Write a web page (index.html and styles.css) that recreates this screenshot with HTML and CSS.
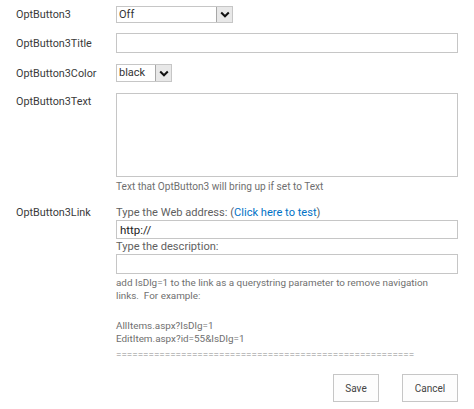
FILE: index.html
```html
<!DOCTYPE html>
<html>
<head>
<meta charset="utf-8">
<link rel="stylesheet" href="styles.css">
</head>
<body>
<div class="form">
  <div class="row r1">
    <div class="label">OptButton3</div>
    <div class="field">
      <div class="select sel-off"><span class="val">Off</span><span class="arrow"><svg width="10" height="7" viewBox="0 0 10 7"><path d="M1.2 1.5 L5 5.3 L8.8 1.5" fill="none" stroke="#111" stroke-width="2"/></svg></span></div>
    </div>
  </div>
  <div class="row r2">
    <div class="label">OptButton3Title</div>
    <div class="field"><div class="input h20"></div></div>
  </div>
  <div class="row r3">
    <div class="label">OptButton3Color</div>
    <div class="field">
      <div class="select sel-color"><span class="val">black</span><span class="arrow"><svg width="10" height="7" viewBox="0 0 10 7"><path d="M1.2 1.5 L5 5.3 L8.8 1.5" fill="none" stroke="#111" stroke-width="2"/></svg></span></div>
    </div>
  </div>
  <div class="row r4">
    <div class="label top">OptButton3Text</div>
    <div class="field">
      <div class="textarea"></div>
      <div class="hint">Text that OptButton3 will bring up if set to Text</div>
    </div>
  </div>
  <div class="row r5">
    <div class="label top">OptButton3Link</div>
    <div class="field">
      <div class="sub">Type the Web address: (<a class="link" href="#">Click here to test</a>)</div>
      <div class="input h19"><span class="inval">http://</span></div>
      <div class="sub">Type the description:</div>
      <div class="input h20"></div>
      <div class="desc">
        <div>add IsDlg=1 to the link as a querystring parameter to remove navigation</div>
        <div>links.&nbsp; For example:</div>
        <div class="blank"></div>
        <div>AllItems.aspx?IsDlg=1</div>
        <div>EditItem.aspx?id=55&amp;IsDlg=1</div>
        <div class="eq">=======================================================</div>
      </div>
    </div>
  </div>
  <div class="buttons">
    <button class="btn save">Save</button>
    <button class="btn cancel">Cancel</button>
  </div>
</div>
</body>
</html>
```

FILE: styles.css
```css
html, body {
  margin: 0;
  padding: 0;
  background: #fff;
}
body {
  font-family: Roboto, "Open Sans", sans-serif;
  color: #444;
}
.form {
  padding: 6px 16px 0 16px;
  width: 442px;
}
.row {
  display: grid;
  grid-template-columns: 100px 342px;
  align-items: center;
}
.r2 { margin-top: 10px; }
.r3 { margin-top: 11px; }
.r4 { margin-top: 11px; align-items: start; }
.r5 { margin-top: 10px; align-items: start; }
.label {
  font-size: 10.8px;
  color: #3a3a3a;
  line-height: 17px;
  white-space: nowrap;
}
.label.top { line-height: 18px; }
.r5 .label { line-height: 15px; }
.select {
  display: flex;
  border: 1px solid #c6c6c6;
  box-sizing: border-box;
  background: #fff;
}
.sel-off { width: 117px; height: 17px; }
.sel-color { width: 56px; height: 18px; }
.val {
  flex: 1;
  font-size: 11px;
  line-height: 16px;
  padding-left: 2px;
  color: #333;
}
.arrow {
  width: 15px;
  border-left: 1px solid #a8a8a8;
  background: #e8e8e8;
  display: flex;
  align-items: center;
  justify-content: center;
}
.input {
  border: 1px solid #c6c6c6;
  box-sizing: border-box;
  width: 342px;
  background: #fff;
}
.h20 { height: 20px; }
.h19 { height: 19px; display: flex; align-items: center; }
.inval {
  font-size: 11.5px;
  color: #222;
  padding-left: 3px;
}
.textarea {
  border: 1px solid #c6c6c6;
  box-sizing: border-box;
  width: 342px;
  height: 84px;
}
.hint {
  font-size: 10.1px;
  color: #6f6f6f;
  line-height: 16px;
  margin-top: 2px;
}
.sub {
  font-size: 11.1px;
  color: #5f5f5f;
  line-height: 15px;
}
.link {
  color: #0072c6;
  text-decoration: none;
}
.desc {
  font-size: 9.9px;
  color: #6f6f6f;
  line-height: 13px;
  margin-top: 2px;
  white-space: nowrap;
}
.desc .blank { height: 17px; }
.desc .eq { margin-top: 3px; color: #8a8a8a; }
.buttons {
  display: flex;
  justify-content: flex-end;
  gap: 23px;
  margin-top: 13px;
  width: 442px;
}
.btn {
  font-family: Roboto, "Open Sans", sans-serif;
  font-size: 10px;
  color: #444;
  background: #fdfdfd;
  border: 1px solid #c6c6c6;
  height: 28px;
  padding: 0;
  margin: 0;
}
.save { width: 46px; }
.cancel { width: 56px; }
```
